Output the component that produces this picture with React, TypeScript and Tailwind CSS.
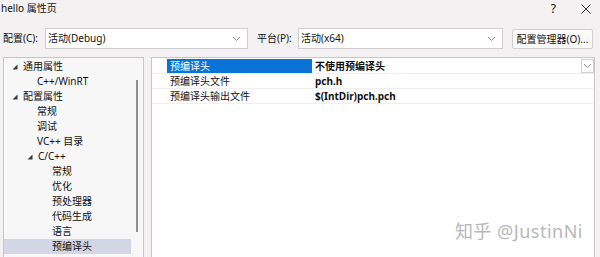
import React from "react";

const font = { fontFamily: '"Noto Sans", "Noto Sans CJK SC", sans-serif' };

function Chevron() {
  return (
    <svg width="9" height="6" viewBox="0 0 9 6">
      <path d="M1 1 L4.5 4.5 L8 1" fill="none" stroke="#8a8a8a" strokeWidth="1" />
    </svg>
  );
}

function Tri() {
  return (
    <svg width="6" height="6" viewBox="0 0 6 6">
      <path d="M5.5 0.5 L5.5 5.5 L0.5 5.5 Z" fill="#3a3a3a" />
    </svg>
  );
}

type Item = { label: string; level: number; expand?: boolean; selected?: boolean };
const items: Item[] = [
  { label: "通用属性", level: 0, expand: true },
  { label: "C++/WinRT", level: 1 },
  { label: "配置属性", level: 0, expand: true },
  { label: "常规", level: 1 },
  { label: "调试", level: 1 },
  { label: "VC++ 目录", level: 1 },
  { label: "C/C++", level: 1, expand: true },
  { label: "常规", level: 2 },
  { label: "优化", level: 2 },
  { label: "预处理器", level: 2 },
  { label: "代码生成", level: 2 },
  { label: "语言", level: 2 },
  { label: "预编译头", level: 2, selected: true },
];

const rows = [
  { n: "预编译头", v: "不使用预编译头", sel: true },
  { n: "预编译头文件", v: "pch.h" },
  { n: "预编译头输出文件", v: "$(IntDir)pch.pch" },
];

export default function App() {
  return (
    <div
      className="w-[600px] h-[257px] overflow-hidden bg-[#f3f1f1] text-[10px] text-[#111] whitespace-nowrap"
      style={font}
    >
      {/* title bar */}
      <div className="h-[17px] flex items-center justify-between">
        <span className="pl-[1px] leading-[17px]">hello 属性页</span>
        <div className="flex items-center gap-[25px] pr-[9px] text-[12px]">
          <span className="leading-none">?</span>
          <svg width="10" height="10" viewBox="0 0 10 10">
            <path d="M0.5 0.5 L9.5 9.5 M9.5 0.5 L0.5 9.5" stroke="#333" strokeWidth="1" />
          </svg>
        </div>
      </div>

      {/* config row */}
      <div className="mt-[11px] h-[21px] flex items-center">
        <span className="pl-[3px] w-[45px] shrink-0 leading-[21px]">配置(C):</span>
        <div className="w-[203px] shrink-0 h-[21px] bg-white border border-[#cfcfcf] flex items-center justify-between pl-[2px] pr-[6px]">
          <span className="leading-[19px]">活动(Debug)</span>
          <Chevron />
        </div>
        <span className="ml-[9px] w-[41px] shrink-0 leading-[21px]">平台(P):</span>
        <div className="w-[205px] shrink-0 h-[21px] bg-white border border-[#cfcfcf] flex items-center justify-between pl-[2px] pr-[6px]">
          <span className="leading-[19px]">活动(x64)</span>
          <Chevron />
        </div>
        <div className="ml-[9px] w-[81px] shrink-0 h-[20px] bg-[#fbfbfb] border border-[#d0d0d0] rounded-[2px] flex items-center justify-center">
          <span className="leading-[18px]">配置管理器(O)...</span>
        </div>
      </div>

      {/* main */}
      <div className="mt-[8px] flex">
        {/* tree */}
        <div className="ml-[3px] w-[141px] shrink-0 h-[210px] bg-[#f7f7f7] border border-[#c6c6c6] flex">
          <div className="w-[127px] pt-[1px]">
            {items.map((it, i) => (
              <div
                key={i}
                className={`h-[15px] flex items-center ${it.selected ? "bg-[#d3d6e5]" : ""}`}
              >
                <div
                  className={`flex items-center shrink-0 ${
                    it.level === 0
                      ? "w-[19px] pl-[8px]"
                      : it.level === 1
                      ? it.expand
                        ? "w-[34px] pl-[23px]"
                        : "w-[33px]"
                      : "w-[48px]"
                  }`}
                >
                  {it.expand ? <Tri /> : null}
                </div>
                <span className="leading-[15px]">{it.label}</span>
              </div>
            ))}
          </div>
          <div className="flex-1 flex justify-center pt-[22px]">
            <div className="w-[2px] h-[152px] bg-[#8f8f8f]" />
          </div>
        </div>

        {/* property grid */}
        <div className="ml-[7px] w-[444px] shrink-0 h-[210px] bg-white border border-[#c6c6c6] relative">
          <div className="flex flex-col pt-[1px]">
            {rows.map((r, i) => (
              <div key={i} className="h-[15px] flex border-b border-[#efefef]">
                <div className="w-[15px] shrink-0 bg-white" />
                <div
                  className={`w-[145px] shrink-0 pl-[3px] flex items-center ${
                    r.sel ? "bg-[#0a73d8] text-white" : ""
                  }`}
                >
                  <span className="leading-[14px]">{r.n}</span>
                </div>
                <div className="flex-1 pl-[3px] flex items-center justify-between font-bold">
                  <span className="leading-[14px]">{r.v}</span>
                  {r.sel ? (
                    <div className="w-[13px] h-[14px] border border-[#cfcfcf] bg-white flex items-center justify-center">
                      <Chevron />
                    </div>
                  ) : null}
                </div>
              </div>
            ))}
          </div>
          <div className="absolute right-[11px] top-[162px] text-[18px] leading-[22px] text-[#b8b8b8] tracking-[0.5px]">
            知乎 @JustinNi
          </div>
        </div>
      </div>
    </div>
  );
}
